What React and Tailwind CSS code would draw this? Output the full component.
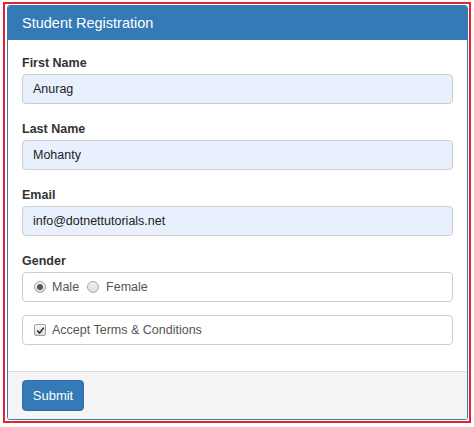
import React from 'react';

function Field({ label, value }) {
  return (
    <div>
      <div className="text-[12.5px] leading-[16px] font-bold text-[#333] mb-[3px]">{label}</div>
      <div className="h-[30px] rounded-[4px] border border-[#ccc] bg-[#e8f0fe] px-[10px] flex items-center text-[12.5px] text-[#222]">
        {value}
      </div>
    </div>
  );
}

function Radio({ checked }) {
  return (
    <span className="w-[12px] h-[12px] rounded-full border border-[#a8a8a8] bg-gradient-to-b from-[#f4f4f4] to-[#dcdcdc] flex items-center justify-center">
      {checked && <span className="w-[6px] h-[6px] rounded-full bg-[#555]" />}
    </span>
  );
}

export default function App() {
  return (
    <div className="w-[474px] h-[427px] bg-white pl-[3px] pt-[2px]" style={{ fontFamily: '"Liberation Sans", Arial, sans-serif' }}>
      <div className="w-[468px] h-[421px] border-2 border-[#e3242d] pl-[2px] pt-[1px] pr-[1px] pb-[1px] flex">
        <div className="flex-1 flex flex-col border border-[#337ab7] rounded-[3px] overflow-hidden bg-white">
          {/* Header */}
          <div className="h-[34px] bg-[#337ab7] text-white text-[14.5px] flex items-center px-[14px] pt-[1px]">
            Student Registration
          </div>

          {/* Body */}
          <div className="flex-1 px-[14px] pt-[15px]">
            <div className="flex flex-col gap-[17px]">
              <Field label="First Name" value="Anurag" />
              <Field label="Last Name" value="Mohanty" />
              <Field label="Email" value="info@dotnettutorials.net" />
              <div>
                <div className="text-[12.5px] leading-[16px] font-bold text-[#333] mb-[3px]">Gender</div>
                <div className="h-[30px] rounded-[4px] border border-[#ccc] bg-white px-[11px] flex items-center text-[12.5px] text-[#555]">
                  <Radio checked />
                  <span className="ml-[6px]">Male</span>
                  <span className="ml-[8px]"><Radio /></span>
                  <span className="ml-[7px]">Female</span>
                </div>
              </div>
            </div>
            <div className="mt-[13px] h-[30px] rounded-[4px] border border-[#ccc] bg-white px-[11px] flex items-center text-[12.5px] text-[#555]">
              <span className="w-[12px] h-[12px] rounded-[2px] border border-[#a0a0a0] bg-gradient-to-b from-[#f6f6f6] to-[#dedede] flex items-center justify-center">
                <svg width="9" height="9" viewBox="0 0 10 10">
                  <path d="M1.5 5.2 L4 7.8 L8.6 1.8" fill="none" stroke="#333" strokeWidth="1.8" />
                </svg>
              </span>
              <span className="ml-[6px]">Accept Terms &amp; Conditions</span>
            </div>
          </div>

          {/* Footer */}
          <div className="h-[48px] bg-[#f5f5f5] border-t border-[#ddd] px-[14px] flex items-center">
            <button className="h-[31px] w-[62px] rounded-[4px] bg-[#337ab7] border border-[#2e6da4] text-white text-[13px]">
              Submit
            </button>
          </div>
        </div>
      </div>
    </div>
  );
}
